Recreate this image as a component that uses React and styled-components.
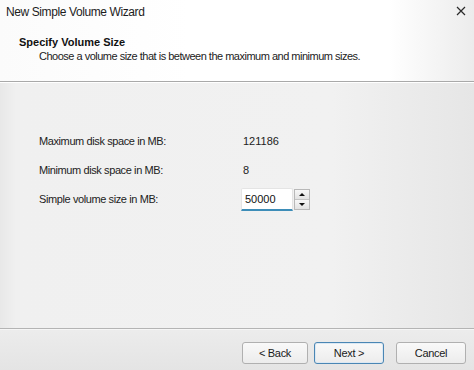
import React from "react";
import styled, { createGlobalStyle } from "styled-components";

const GlobalStyle = createGlobalStyle`
  html, body {
    margin: 0;
    padding: 0;
    background: #f0f0f0;
  }
  body {
    font-family: "Liberation Sans", Arial, sans-serif;
    color: #1a1a1a;
  }
`;

const Window = styled.div`
  width: 474px;
  height: 370px;
  display: flex;
  flex-direction: column;
  overflow: hidden;
`;

const Header = styled.div`
  height: 81px;
  display: flex;
  flex-direction: column;
  background: linear-gradient(to right, #fbfbfb 0, #ffffff 40%, #ffffff 82%, #ececec 100%);
  border-bottom: 1px solid #a9a9a9;
  box-shadow: 0 1px 0 #ffffff;
`;

const TitleBar = styled.div`
  height: 24px;
  display: flex;
  align-items: center;
  justify-content: space-between;
  padding: 0 8px 0 6px;
  font-size: 12px;
  letter-spacing: -0.4px;
  color: #1c1c1c;
`;

const Close = styled.span`
  display: flex;
  width: 10px;
  height: 10px;
  margin-top: -2px;
`;

const HeaderText = styled.div`
  padding: 11px 0 0 19px;
`;

const Heading = styled.div`
  font-size: 11px;
  font-weight: bold;
  line-height: 14px;
  color: #111;
`;

const Subtitle = styled.div`
  margin: 0 0 0 20px;
  font-size: 11px;
  line-height: 14px;
  letter-spacing: -0.5px;
  color: #222;
`;

const Body = styled.div`
  flex: 1;
  margin-top: 1px;
  padding: 47px 0 0 39px;
  background: linear-gradient(to right, #e8e8e8 0, #f0f0f0 16px, #f1f1f1 70%, #e6e6e6 100%);
  border-bottom: 1px solid #b4b4b4;
  box-shadow: 0 1px 0 #f6f6f6;
`;

const Fields = styled.div`
  display: grid;
  grid-template-columns: 202px auto;
  grid-auto-rows: 22px;
  row-gap: 7px;
  align-items: center;
`;

const Label = styled.div`
  font-size: 11px;
  letter-spacing: -0.4px;
  color: #222;
`;

const Value = styled.div`
  padding-left: 2px;
  font-size: 11px;
  color: #222;
`;

const SpinRow = styled.div`
  display: flex;
  align-items: center;
  gap: 1px;
`;

const Input = styled.div`
  width: 47px;
  height: 20px;
  padding-left: 3px;
  display: flex;
  align-items: center;
  font-size: 11px;
  color: #111;
  background: #fff;
  border: 1px solid #e4e4e4;
  border-bottom: 2px solid #3d8db8;
  border-radius: 2px 2px 0 0;
`;

const Spinner = styled.div`
  width: 14px;
  height: 19px;
  display: flex;
  flex-direction: column;
  border: 1px solid #b8b8b8;
  background: #eeeeee;
`;

const SpinHalf = styled.div`
  flex: 1;
  display: flex;
  align-items: center;
  justify-content: center;
  background: linear-gradient(#f7f7f7, #e2e2e2);
  border-bottom: ${(p) => (p.$top ? "1px solid #c4c4c4" : "none")};
`;

const Arrow = styled.span`
  width: 0;
  height: 0;
  border-left: 3px solid transparent;
  border-right: 3px solid transparent;
  ${(p) => (p.$up ? "border-bottom: 3px solid #111;" : "border-top: 3px solid #111;")}
`;

const Footer = styled.div`
  height: 40px;
  margin-top: 1px;
  display: flex;
  align-items: flex-start;
  justify-content: flex-end;
  padding: 12px 8px 0 0;
  box-sizing: border-box;
  background: linear-gradient(#ececec, #e4e4e4);
`;

const Button = styled.button`
  width: ${(p) => p.$w || 68}px;
  height: 22px;
  margin-left: ${(p) => p.$gap || 0}px;
  padding: 0;
  font-family: "Liberation Sans", Arial, sans-serif;
  font-size: 11px;
  letter-spacing: -0.3px;
  color: #1a1a1a;
  background: linear-gradient(#f9f9f9, #ececec);
  border: 1px solid ${(p) => (p.$primary ? "#4a86b4" : "#b0b0b0")};
  border-radius: 3px;
  box-shadow: ${(p) => (p.$primary ? "inset 0 0 0 1px #dbe8f3" : "none")};
`;

const CloseIcon = () => (
  <svg width="10" height="10" viewBox="0 0 10 10">
    <path d="M1 1 L9 9 M9 1 L1 9" stroke="#2a2a2a" strokeWidth="1.2" />
  </svg>
);

const App = () => {
  return (
    <Window>
      <GlobalStyle />
      <Header>
        <TitleBar>
          <span>New Simple Volume Wizard</span>
          <Close>
            <CloseIcon />
          </Close>
        </TitleBar>
        <HeaderText>
          <Heading>Specify Volume Size</Heading>
          <Subtitle>
            Choose a volume size that is between the maximum and minimum sizes.
          </Subtitle>
        </HeaderText>
      </Header>
      <Body>
        <Fields>
          <Label>Maximum disk space in MB:</Label>
          <Value>121186</Value>
          <Label>Minimum disk space in MB:</Label>
          <Value>8</Value>
          <Label>Simple volume size in MB:</Label>
          <SpinRow>
            <Input>50000</Input>
            <Spinner>
              <SpinHalf $top>
                <Arrow $up />
              </SpinHalf>
              <SpinHalf>
                <Arrow />
              </SpinHalf>
            </Spinner>
          </SpinRow>
        </Fields>
      </Body>
      <Footer>
        <Button $w={66}>&lt; Back</Button>
        <Button $w={70} $gap={6} $primary>
          Next &gt;
        </Button>
        <Button $w={70} $gap={12}>
          Cancel
        </Button>
      </Footer>
    </Window>
  );
};

export default App;
